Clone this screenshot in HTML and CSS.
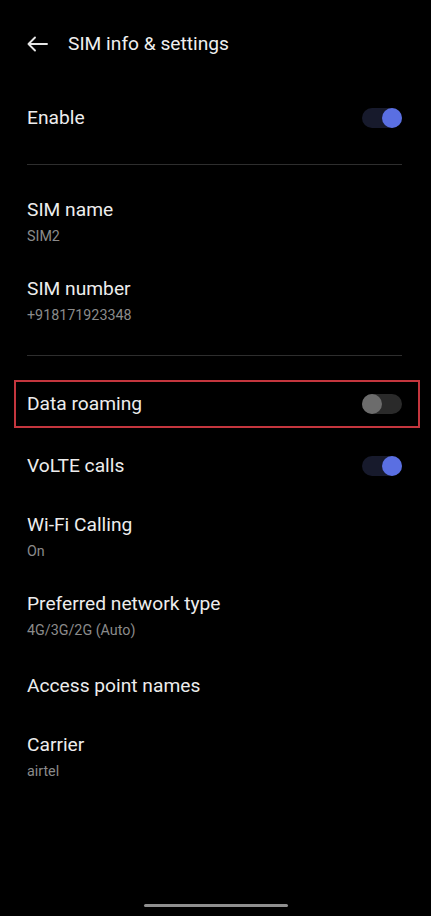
FILE: index.html
```html
<!DOCTYPE html>
<html lang="en">
<head>
<meta charset="utf-8">
<meta name="viewport" content="width=device-width, initial-scale=1">
<title>SIM info &amp; settings</title>
<link rel="stylesheet" href="styles.css">
</head>
<body>
<div class="screen">
  <header class="appbar">
    <svg class="back" width="22" height="16" viewBox="0 0 22 16" aria-hidden="true">
      <path d="M21 8H2.5M9 1.5L2.5 8L9 14.5" fill="none" stroke="#e6e6e6" stroke-width="1.9" stroke-linecap="round" stroke-linejoin="round"/>
    </svg>
    <h1 class="title">SIM info &amp; settings</h1>
  </header>

  <div class="row single">
    <span class="label">Enable</span>
    <span class="toggle on"><span class="knob"></span></span>
  </div>

  <div class="divider"></div>

  <div class="row double">
    <span class="label">SIM name</span>
    <span class="sub">SIM2</span>
  </div>
  <div class="row double">
    <span class="label">SIM number</span>
    <span class="sub">+918171923348</span>
  </div>

  <div class="divider"></div>

  <div class="row single highlighted">
    <span class="label">Data roaming</span>
    <span class="toggle off"><span class="knob"></span></span>
  </div>
  <div class="row single">
    <span class="label">VoLTE calls</span>
    <span class="toggle on"><span class="knob"></span></span>
  </div>
  <div class="row double">
    <span class="label">Wi-Fi Calling</span>
    <span class="sub">On</span>
  </div>
  <div class="row double">
    <span class="label">Preferred network type</span>
    <span class="sub">4G/3G/2G (Auto)</span>
  </div>
  <div class="row single">
    <span class="label">Access point names</span>
  </div>
  <div class="row double">
    <span class="label">Carrier</span>
    <span class="sub">airtel</span>
  </div>

  <div class="home-indicator"></div>
</div>
</body>
</html>
```

FILE: styles.css
```css
* { box-sizing: border-box; }

html, body {
  margin: 0;
  padding: 0;
  background: #000;
}

body {
  font-family: Roboto, "Noto Sans", "Liberation Sans", sans-serif;
  color: #ececec;
}

.screen {
  min-height: 916px;
  display: flex;
  flex-direction: column;
}

.appbar {
  height: 87px;
  display: flex;
  align-items: center;
  padding-left: 26px;
  gap: 20px;
}

.back {
  display: block;
  flex: none;
}

.title {
  margin: 0;
  font-size: 19.2px;
  font-weight: 400;
  color: #efefef;
}

.row {
  position: relative;
  padding: 0 29px 0 27px;
}

.row.single {
  height: 62px;
  display: flex;
  align-items: center;
  justify-content: space-between;
}

.row.double {
  height: 79px;
  display: flex;
  flex-direction: column;
  padding-top: 16px;
  gap: 4px;
}

.label {
  font-size: 19.2px;
  line-height: 24px;
  color: #ededed;
}

.sub {
  font-size: 14.3px;
  line-height: 20px;
  color: #8b8b8b;
}

.divider {
  height: 1px;
  background: #2e2e2e;
  margin: 15px 29px 17px 27px;
}

.toggle {
  width: 40px;
  height: 20px;
  border-radius: 10px;
  display: flex;
  align-items: center;
  flex: none;
}

.toggle .knob {
  width: 20px;
  height: 20px;
  border-radius: 50%;
}

.toggle.on {
  background: #171a2c;
  justify-content: flex-end;
}

.toggle.on .knob {
  background: #5a6fe2;
}

.toggle.off {
  background: #2a2a2a;
  justify-content: flex-start;
}

.toggle.off .knob {
  background: #6c6c6c;
}

.highlighted::after {
  content: "";
  position: absolute;
  left: 14px;
  right: 11px;
  top: 7px;
  bottom: 7px;
  border: 2px solid #c4363e;
  pointer-events: none;
}

.home-indicator {
  width: 144px;
  height: 3px;
  border-radius: 2px;
  background: #8f8f8f;
  margin: auto auto 9px;
}
```
